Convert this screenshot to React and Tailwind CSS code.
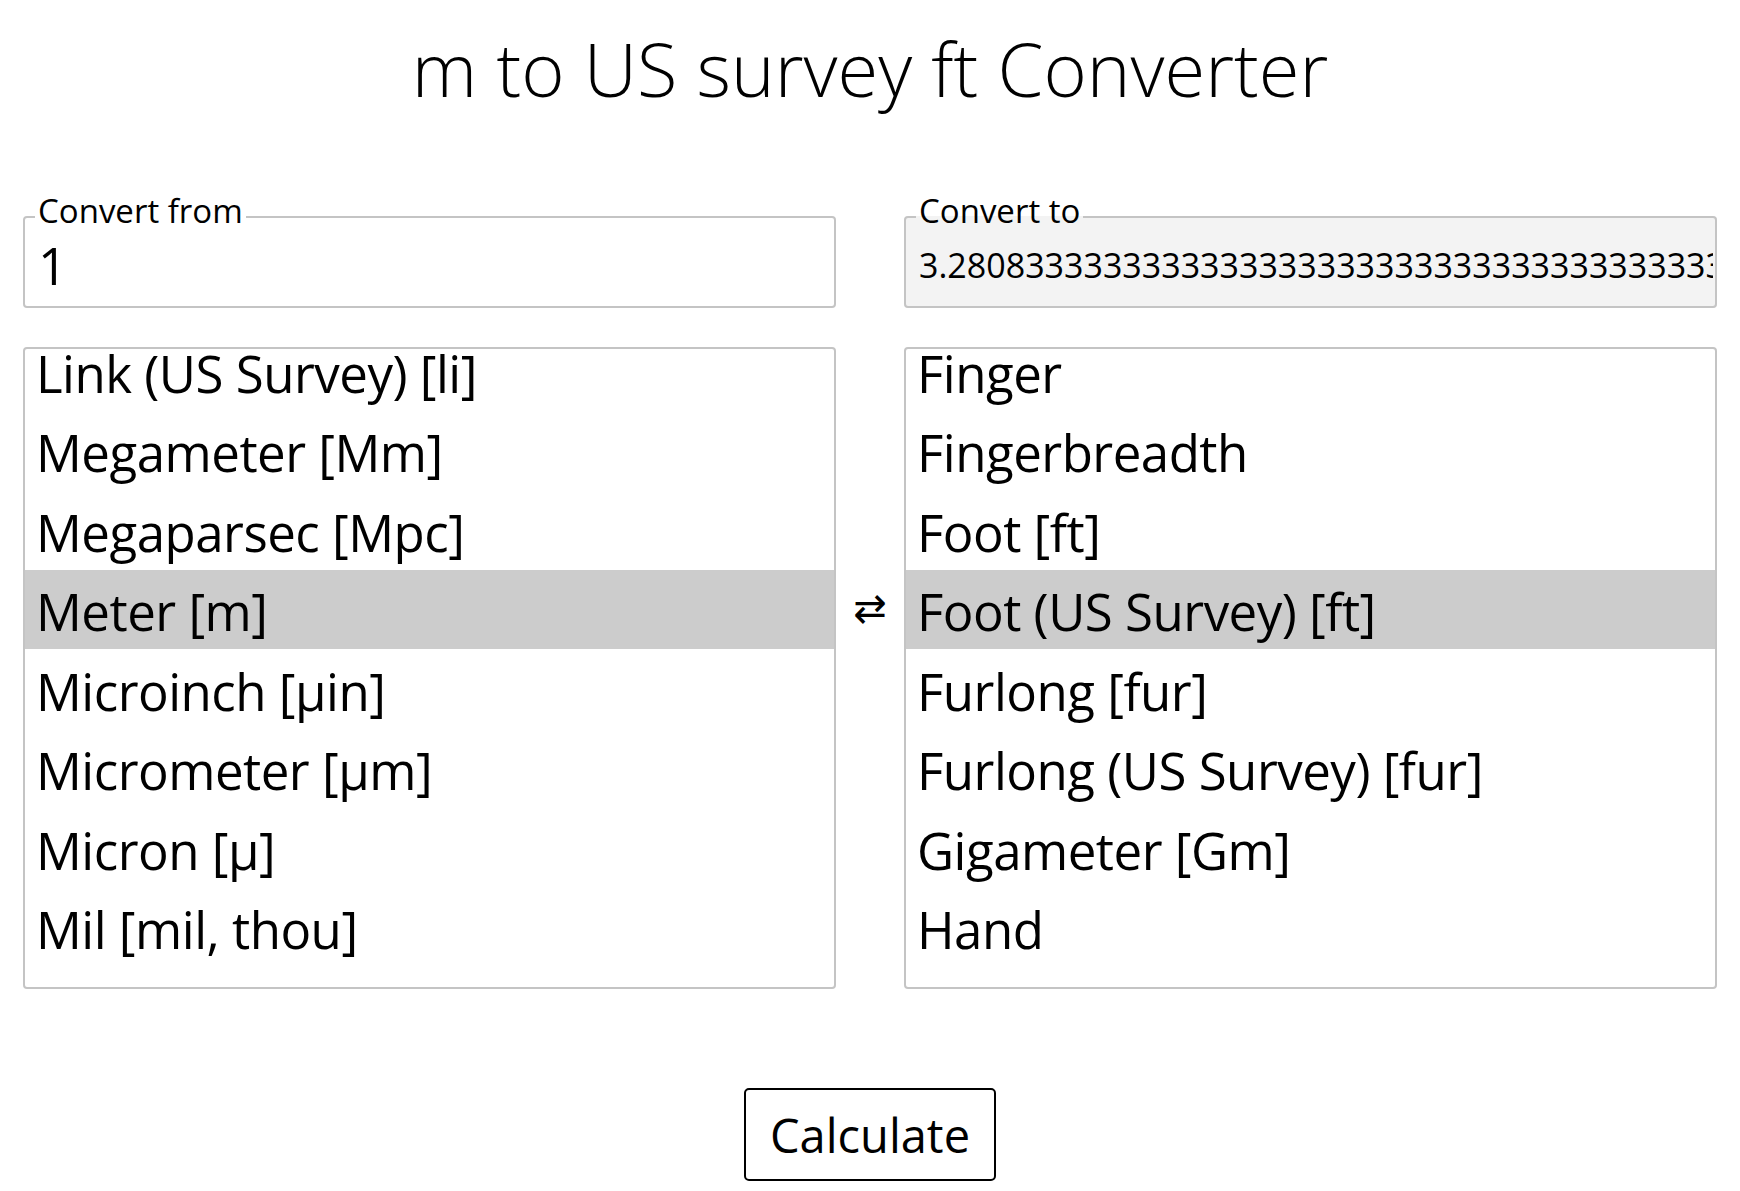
import React, { useLayoutEffect, useRef, useState } from 'react';

const fromUnits = [
  'Light Year [ly]',
  'Link [li]',
  'Link (US Survey) [li]',
  'Megameter [Mm]',
  'Megaparsec [Mpc]',
  'Meter [m]',
  'Microinch [µin]',
  'Micrometer [µm]',
  'Micron [µ]',
  'Mil [mil, thou]',
  'Mile [mi, mi(Int)]',
  'Mile (US Survey) [mi]',
];

const toUnits = [
  'Fathom [fath]',
  'Fermi [F, f]',
  'Finger',
  'Fingerbreadth',
  'Foot [ft]',
  'Foot (US Survey) [ft]',
  'Furlong [fur]',
  'Furlong (US Survey) [fur]',
  'Gigameter [Gm]',
  'Hand',
  'Handbreadth',
  'Hectometer [hm]',
];

// rows are 79.5px tall, list is scrolled so the selected row sits 4th
const SCROLL = 176.5;

function UnitList({ units, selected, onSelect }) {
  const ref = useRef(null);

  useLayoutEffect(() => {
    if (ref.current) ref.current.scrollTop = SCROLL;
  }, []);

  return (
    <div
      ref={ref}
      className="h-[642px] overflow-hidden rounded-[4px] border-2 border-[#c4c4c4] bg-white"
    >
      {units.map((unit) => (
        <div
          key={unit}
          onClick={() => onSelect(unit)}
          className={
            unit === selected
              ? 'h-[79.5px] cursor-default whitespace-nowrap bg-[#cccccc] pl-[11px] pt-[7.5px] text-[51px] leading-[69.5px] tracking-[-0.5px]'
              : 'h-[79.5px] cursor-default whitespace-nowrap pl-[11px] pt-[7.5px] text-[51px] leading-[69.5px] tracking-[-0.5px]'
          }
        >
          {unit}
        </div>
      ))}
    </div>
  );
}

export default function App() {
  const [from, setFrom] = useState('Meter [m]');
  const [to, setTo] = useState('Foot (US Survey) [ft]');

  return (
    <div className="min-h-screen bg-white px-[23px] pt-[18px] font-['Open_Sans',sans-serif] text-black">
      <h1 className="text-center text-[74px] font-light leading-[101px]">m to US survey ft Converter</h1>

      <div className="mt-[69px] grid grid-cols-[1fr_68px_1fr]">
        {/* Convert from */}
        <fieldset className="rounded-[4px] border-2 border-[#c4c4c4] px-[13px] pb-[6px]">
          <legend className="-ml-[3px] px-[3px] pb-[13px] text-[33px] leading-[45px]">Convert from</legend>
          <input
            type="text"
            defaultValue="1"
            className="-mt-[16px] block h-[70px] w-full bg-transparent p-0 text-[51px] outline-none"
          />
        </fieldset>

        <div />

        {/* Convert to */}
        <fieldset className="rounded-[4px] border-2 border-[#c4c4c4] bg-[#f3f3f3] pb-[6px] pl-[13px] pr-[2px]">
          <legend className="-ml-[3px] px-[3px] pb-[13px] text-[33px] leading-[45px]">Convert to</legend>
          <input
            type="text"
            readOnly
            value="3.28083333333333333333333333333333333333333333333333"
            className="-mt-[16px] block h-[70px] w-full bg-transparent p-0 text-[34px] outline-none"
          />
        </fieldset>

        <div className="mt-[39px]">
          <UnitList units={fromUnits} selected={from} onSelect={setFrom} />
        </div>

        <div className="mt-[39px] flex justify-center pt-[241px]">
          <span className="h-[40px] font-['DejaVu_Sans',sans-serif] text-[40px] leading-[40px]">⇄</span>
        </div>

        <div className="mt-[39px]">
          <UnitList units={toUnits} selected={to} onSelect={setTo} />
        </div>
      </div>

      <button className="mx-auto mt-[99px] block rounded-[5px] border-2 border-black bg-white px-[24px] py-[12.5px] text-[47px] leading-[64px]">
        Calculate
      </button>
    </div>
  );
}
